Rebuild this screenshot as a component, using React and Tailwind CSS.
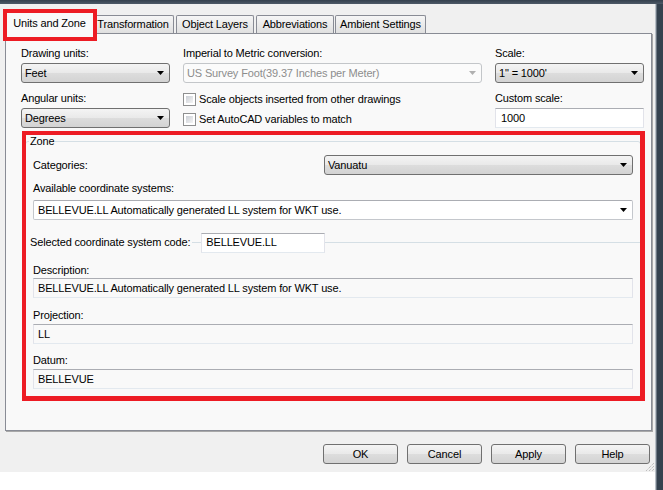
const selBg =
  "bg-[linear-gradient(to_bottom,#f4f4f4,#e9e9e9_50%,#dddddd_50%,#d3d3d3)]";

function Arrow({ color = "#000" }) {
  return (
    <svg width="7" height="4" viewBox="0 0 7 4" className="shrink-0">
      <path d="M0 0h7L3.5 4z" fill={color} />
    </svg>
  );
}

function Select({ value, className = "" }) {
  return (
    <div
      className={
        "flex items-center h-[20px] border border-[#707070] rounded-[3px] pl-[3px] pr-[5px] " +
        selBg +
        " " +
        className
      }
    >
      <span className="flex-1 whitespace-nowrap">{value}</span>
      <Arrow />
    </div>
  );
}

function TextBox({ value, className = "" }) {
  return (
    <div
      className={
        "flex items-center h-[20px] border border-t-[#abadb3] border-x-[#e2e3ea] border-b-[#e3e9ef] pl-[4px] whitespace-nowrap " +
        className
      }
    >
      {value}
    </div>
  );
}

function Check({ label, className = "" }) {
  return (
    <div className={"flex items-center h-[13px] " + className}>
      <div className="w-[13px] h-[13px] border border-[#8e8f8f] bg-white p-[2px] shrink-0">
        <div className="w-full h-full bg-gradient-to-br from-[#cbcfd5] to-[#f4f4f4]" />
      </div>
      <span className="ml-[3px] whitespace-nowrap">{label}</span>
    </div>
  );
}

function Tab({ label, className = "" }) {
  return (
    <div
      className={
        "h-[18px] flex items-center justify-center border border-b-0 border-[#898c95] rounded-t-[2px] bg-gradient-to-b from-[#f6f6f6] to-[#e0e0e0] whitespace-nowrap " +
        className
      }
    >
      {label}
    </div>
  );
}

function Button({ label }) {
  return (
    <div
      className={
        "w-[75px] h-[20px] flex items-center justify-center border border-[#707070] rounded-[3px] " +
        selBg
      }
    >
      {label}
    </div>
  );
}

export default function App() {
  return (
    <div className="w-[663px] h-[490px] bg-white flex flex-col overflow-hidden relative font-['Liberation_Sans',Arial,sans-serif] text-[11px] leading-[13px] tracking-[-0.15px] text-black">
      <div className="h-[4px] bg-gradient-to-b from-[#34404d] to-[#4d5967] shrink-0" />
      <div className="flex flex-1">
        <div className="w-[655px] flex flex-col">
          <div className="h-[468px] bg-[#f0f0f0] flex flex-col relative">
            {/* tabs */}
            <div className="flex items-end h-[29px] pl-[5px]">
              <div className="relative z-10 w-[89px] h-[23px] -mb-px flex items-center justify-center border border-b-0 border-[#898c95] rounded-t-[2px] bg-[#f9f9f9] whitespace-nowrap">
                Units and Zone
              </div>
              <Tab label="Transformation" className="w-[82px] -ml-[2px]" />
              <Tab label="Object Layers" className="w-[78px] ml-[2px]" />
              <Tab label="Abbreviations" className="w-[78px] ml-[2px]" />
              <Tab label="Ambient Settings" className="w-[91px] ml-[1px]" />
            </div>

            {/* panel */}
            <div className="ml-[5px] w-[647px] h-[398px] border border-[#898c95] bg-[#f9f9f9] shadow-[1px_1px_0_#a8a8a8] flex flex-col">
              <div className="flex gap-[13px] pl-[15px] pt-[13px]">
                <div className="w-[149px] flex flex-col">
                  <span>Drawing units:</span>
                  <Select value="Feet" className="mt-[3px]" />
                  <span className="mt-[9px]">Angular units:</span>
                  <Select value="Degrees" className="mt-[3px]" />
                </div>
                <div className="w-[299px] flex flex-col">
                  <span>Imperial to Metric conversion:</span>
                  <div className="mt-[3px] flex items-center h-[20px] border border-[#c3c6c9] rounded-[3px] bg-[#fbfbfb] pl-[3px] pr-[5px] text-[#8d8d8d]">
                    <span className="flex-1 whitespace-nowrap">
                      US Survey Foot(39.37 Inches per Meter)
                    </span>
                    <Arrow color="#b0b0b0" />
                  </div>
                  <Check
                    label="Scale objects inserted from other drawings"
                    className="mt-[10px]"
                  />
                  <Check
                    label="Set AutoCAD variables to match"
                    className="mt-[7px]"
                  />
                </div>
                <div className="w-[149px] flex flex-col">
                  <span>Scale:</span>
                  <Select value={'1" = 1000\''} className="mt-[3px]" />
                  <span className="mt-[9px]">Custom scale:</span>
                  <TextBox value="1000" className="mt-[3px] bg-white pl-[5px]" />
                </div>
              </div>

              {/* zone group */}
              <div className="ml-[19px] w-[616px] h-[257px] mt-[13px] border border-[#d5dfe5] rounded-[3px] flex flex-col">
                <span className="-mt-[7px] ml-[3px] px-[1px] bg-[#f9f9f9] self-start">
                  Zone
                </span>
                <div className="px-[7px] flex flex-col">
                  <div className="mt-[7px] flex items-center justify-between h-[20px]">
                    <span>Categories:</span>
                    <Select value="Vanuatu" className="w-[309px]" />
                  </div>
                  <span className="mt-[7px]">Available coordinate systems:</span>
                  <div className="mt-[5px] flex items-center h-[20px] border border-[#c4c7cc] border-t-[#abadb3] rounded-[2px] bg-white pl-[4px] pr-[5px]">
                    <span className="flex-1 whitespace-nowrap">
                      BELLEVUE.LL Automatically generated LL system for WKT use.
                    </span>
                    <Arrow />
                  </div>
                  <div className="-mx-[7px] mt-[13px] pl-[4px] flex items-center h-[19px]">
                    <span className="whitespace-nowrap">
                      Selected coordinate system code:
                    </span>
                    <span className="ml-[2px] w-[9px] h-px bg-[#d5dfe5]" />
                    <TextBox
                      value="BELLEVUE.LL"
                      className="w-[124px] h-[19px] bg-white"
                    />
                    <span className="flex-1 h-px bg-[#d5dfe5]" />
                  </div>
                  <span className="mt-[12px]">Description:</span>
                  <TextBox
                    value="BELLEVUE.LL Automatically generated LL system for WKT use."
                    className="mt-[1px] bg-[#f9f9f9]"
                  />
                  <span className="mt-[11px]">Projection:</span>
                  <TextBox value="LL" className="mt-[2px] bg-[#f9f9f9]" />
                  <span className="mt-[10px]">Datum:</span>
                  <TextBox value="BELLEVUE" className="mt-[2px] bg-[#f9f9f9]" />
                </div>
              </div>
            </div>

            {/* buttons */}
            <div className="flex gap-[9px] pl-[323px] mt-[13px]">
              <Button label="OK" />
              <Button label="Cancel" />
              <Button label="Apply" />
              <Button label="Help" />
            </div>

            {/* size grip */}
            <svg
              width="10"
              height="10"
              viewBox="0 0 10 10"
              className="absolute right-0 bottom-0"
            >
              <path
                d="M9 1L1 9M9 4L4 9M9 7L7 9"
                stroke="#a9a9a9"
                strokeWidth="1"
                strokeDasharray="1 1"
              />
            </svg>
          </div>
        </div>
        <div className="flex-1 flex">
          <div className="w-[1px] bg-[#b9c0c7]" />
          <div className="w-[1px] bg-[#6b7682]" />
          <div className="flex-1 bg-[#35424f]" />
        </div>
      </div>

      {/* annotation boxes */}
      <div className="absolute left-[3px] top-[9px] w-[94px] h-[32px] border-4 border-[#ed1c24] z-20" />
      <div className="absolute left-[22px] top-[131px] w-[623px] h-[270px] border-4 border-r-[5px] border-b-[5px] border-[#ed1c24] z-20" />
    </div>
  );
}
